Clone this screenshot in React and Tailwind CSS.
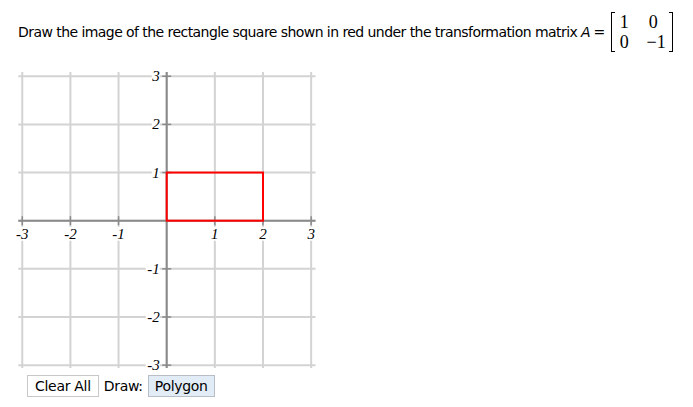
import React from "react";

const U = 48.15;
const OX = 150.7;
const OY = 154.7;
const TOP = 6;
const BOT = 302;
const px = (v) => OX + v * U;
const py = (v) => OY - v * U;

function Graph() {
  const ints = [-3, -2, -1, 0, 1, 2, 3];
  const labels = [-3, -2, -1, 1, 2, 3];
  return (
    <svg width="304" height="308" viewBox="0 0 304 308" className="block">
      {ints.map((i) => (
        <line key={"v" + i} x1={px(i)} x2={px(i)} y1={TOP} y2={BOT} stroke="#d3d3d3" strokeWidth="2" />
      ))}
      {ints.map((i) => (
        <line key={"h" + i} y1={py(i)} y2={py(i)} x1={2.3} x2={299.5} stroke="#d3d3d3" strokeWidth="2" />
      ))}
      <line x1={2.3} x2={299.5} y1={OY} y2={OY} stroke="#8a8a8a" strokeWidth="2" />
      <line x1={OX} x2={OX} y1={TOP} y2={BOT} stroke="#8a8a8a" strokeWidth="2" />
      {labels.map((i) => (
        <line key={"tx" + i} x1={px(i)} x2={px(i)} y1={OY - 4.5} y2={OY + 4.5} stroke="#8a8a8a" strokeWidth="1.5" />
      ))}
      {labels.map((i) => (
        <line key={"ty" + i} y1={py(i)} y2={py(i)} x1={OX - 4.5} x2={OX + 4.5} stroke="#8a8a8a" strokeWidth="1.5" />
      ))}
      {labels.map((i) => (
        <g key={"lx" + i}>
          <rect x={px(i) - (i < 0 ? 6 : 4)} y={OY + 6} width={i < 0 ? 12 : 8} height={14} fill="white" />
          <text
            x={px(i)}
            y={OY + 18}
            textAnchor="middle"
            fontFamily="'Liberation Serif', serif"
            fontStyle="italic"
            fontSize="15"
            fill="#000"
          >
            {i < 0 ? "-" + -i : i}
          </text>
        </g>
      ))}
      {labels.map((i) => (
        <g key={"ly" + i}>
          <rect x={OX - 7 - (i < 0 ? 14 : 8)} y={py(i) - 7} width={i < 0 ? 14 : 8} height={14} fill="white" />
          <text
            x={OX - 7}
            y={py(i) + 5}
            textAnchor="end"
            fontFamily="'Liberation Serif', serif"
            fontStyle="italic"
            fontSize="15"
            fill="#000"
          >
            {i < 0 ? "-" + -i : i}
          </text>
        </g>
      ))}
      <rect x={OX} y={py(1)} width={2 * U} height={U} fill="none" stroke="#ff0000" strokeWidth="2" />
    </svg>
  );
}

export default function App() {
  return (
    <div className="w-[693px] h-[407px] bg-white text-black overflow-hidden" style={{ fontFamily: "'DejaVu Sans', sans-serif" }}>
      <div className="flex items-center pl-[18px] h-[64px]">
        <span className="text-[14px] tracking-[-0.56px]">
          Draw the image of the rectangle square shown in red under the transformation matrix{" "}
          <i>A</i>
          <span className="tracking-[-1px]"> </span>=
        </span>
        <div className="flex items-stretch ml-[6px] h-[40px]" style={{ fontFamily: "'Liberation Serif', serif" }}>
          <div className="w-[4px] border-l-[1.5px] border-t-[1.5px] border-b-[1.5px] border-black" />
          <div className="grid grid-cols-[16px_30px] grid-rows-2 items-center text-[18px] leading-none pl-[5px] pr-[3px]">
            <span>1</span>
            <span className="text-right pr-[8px]">0</span>
            <span>0</span>
            <span className="text-right">−1</span>
          </div>
          <div className="w-[4px] border-r-[1.5px] border-t-[1.5px] border-b-[1.5px] border-black" />
        </div>
      </div>
      <div className="ml-[16px] mt-[2px]">
        <Graph />
      </div>
      <div className="flex items-center ml-[27px] mt-[1px] text-[14px]">
        <button className="h-[22px] px-[7px] border border-[#c8c8c8] bg-white tracking-[-0.3px]">Clear All</button>
        <span className="ml-[5px] tracking-[-0.3px]">Draw:</span>
        <button className="ml-[5px] h-[22px] px-[6px] border border-[#b8bec6] bg-[#e2ecf6] tracking-[-0.3px]">Polygon</button>
      </div>
    </div>
  );
}
